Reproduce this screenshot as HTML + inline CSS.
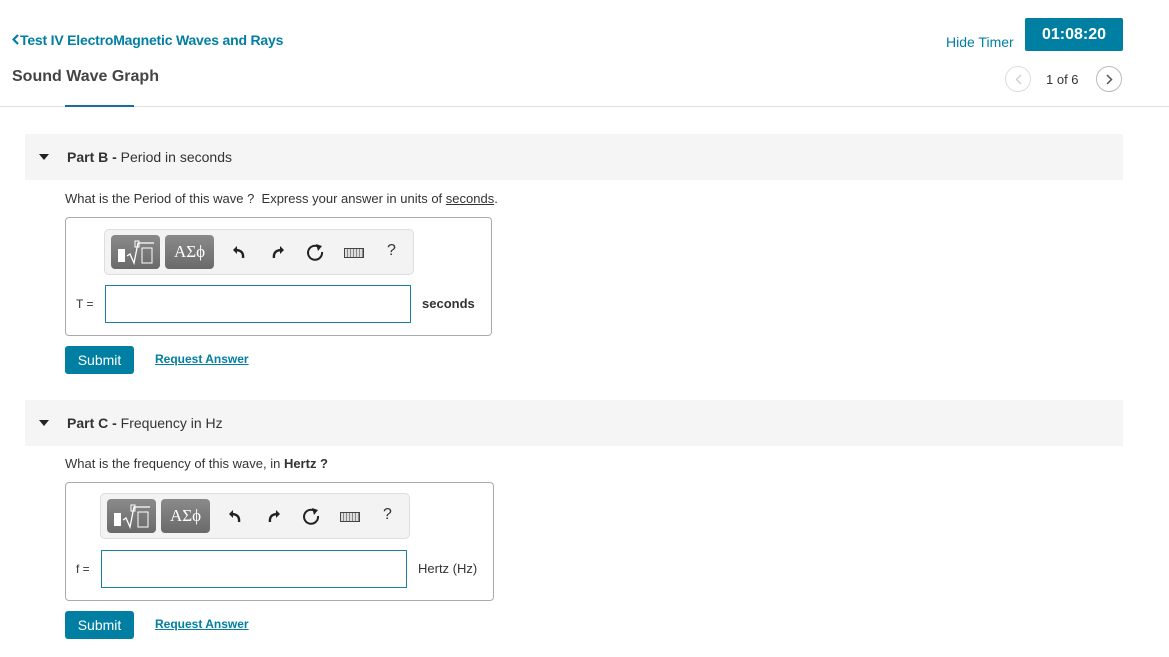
<!DOCTYPE html>
<html><head><meta charset="utf-8"><style>
*{margin:0;padding:0;box-sizing:border-box}
body{width:1169px;height:657px;background:#fff;font-family:"Liberation Sans",Arial,sans-serif;color:#333;position:relative;overflow:hidden}
.a{position:absolute}
.bar{position:absolute;left:25px;width:1098px;height:46px;background:#f5f5f5;font-size:14px;color:#333}
.bar .tri{position:absolute;left:14px;top:20px;width:0;height:0;border-left:5px solid transparent;border-right:5px solid transparent;border-top:6px solid #222}
.bar span{position:absolute;left:42px;top:15px}
.q{font-size:13px;color:#333}
.box{position:absolute;border:1px solid #aaa;border-radius:4px}
.tb{position:absolute;height:46px;background:#f3f3f3;border:1px solid #ddd;border-radius:5px}
.btn{position:absolute;top:5px;height:34px;background:linear-gradient(#8a8a8a,#6a6a6a);border-radius:4px;color:#fff}
.inp{position:absolute;height:38px;border:1px solid #1a7fa0;background:#fff}
.sub{position:absolute;left:65px;width:69px;height:28px;background:#007fa3;border-radius:3px;color:#fff;font-size:14px;text-align:center;line-height:28px}
.req{position:absolute;left:155px;font-size:12px;font-weight:bold;color:#007fa3;text-decoration:underline}
svg.ic{position:absolute}
</style></head><body>
<svg class="a" style="left:12px;top:34px" width="7" height="11" viewBox="0 0 7 11"><path d="M6 1 L1.5 5.5 L6 10" stroke="#007fa3" stroke-width="2.2" fill="none"/></svg>
<div class="a" style="left:20px;top:32px;font-size:14px;font-weight:bold;color:#007fa3;letter-spacing:-0.2px">Test IV ElectroMagnetic Waves and Rays</div>
<div class="a" style="left:12px;top:68px;font-size:16px;font-weight:bold;color:#444">Sound Wave Graph</div>
<div class="a" style="left:0;top:106px;width:1169px;height:1px;background:#ddd"></div>
<div class="a" style="left:65px;top:105px;width:69px;height:2px;background:#1a6f8c"></div>
<div class="a" style="left:946px;top:34px;font-size:14px;color:#007fa3">Hide Timer</div>
<div class="a" style="left:1025px;top:18px;width:98px;height:33px;background:#007fa3;border-radius:2px;color:#fff;font-size:16px;font-weight:bold;text-align:center;line-height:33px">01:08:20</div>
<div class="a" style="left:1005px;top:66px;width:26px;height:26px;border:1px solid #ddd;border-radius:50%"><svg class="a" style="left:9px;top:7px" width="7" height="11"><path d="M6 1 L1.5 5.5 L6 10" stroke="#ccc" stroke-width="1.3" fill="none"/></svg></div>
<div class="a" style="left:1046px;top:72px;font-size:13px;color:#333">1 of 6</div>
<div class="a" style="left:1096px;top:66px;width:26px;height:26px;border:1px solid #bbb;border-radius:50%"><svg class="a" style="left:9px;top:7px" width="7" height="11"><path d="M1 1 L5.5 5.5 L1 10" stroke="#555" stroke-width="1.5" fill="none"/></svg></div>

<div class="bar" style="top:134px"><div class="tri"></div><span><b>Part B -</b> Period in seconds</span></div>
<div class="a q" style="left:65px;top:191px">What is the Period of this wave ?&nbsp; Express your answer in units of <u>seconds</u>.</div>
<div class="box" style="left:65px;top:217px;width:427px;height:119px"></div>
<div class="tb" style="left:104px;top:229px;width:310px">
 <div class="btn" style="left:6px;width:49px"><div class="a" style="left:7px;top:14px;width:7px;height:13px;background:#fff"></div><svg class="a" style="left:15px;top:5px" width="30" height="25"><path d="M1 16 L4 14 L8 23 L12 3 L28 3" stroke="#fff" stroke-width="1.3" fill="none"/><rect x="9" y="1" width="4" height="6" stroke="#fff" fill="none"/><rect x="16" y="8" width="10" height="15" stroke="#fff" fill="none"/></svg></div>
 <div class="btn" style="left:60px;width:49px;font-family:'Liberation Serif';font-size:17px;text-align:center;line-height:34px">ΑΣϕ</div>
 <svg class="ic" style="left:127px;top:15px" width="14" height="14"><path d="M5 1 L1 5 L5 9 Z" fill="#222"/><path d="M3 5 Q12 5 11 13" stroke="#222" stroke-width="2.4" fill="none"/></svg>
 <svg class="ic" style="left:166px;top:15px" width="14" height="14"><path d="M9 1 L13 5 L9 9 Z" fill="#222"/><path d="M11 5 Q2 5 3 13" stroke="#222" stroke-width="2.4" fill="none"/></svg>
 <svg class="ic" style="left:202px;top:13px" width="18" height="19"><path d="M12 4 A7 7 0 1 0 15 9" stroke="#222" stroke-width="2" fill="none"/><path d="M9 1 L15 3 L11 8 Z" fill="#222"/></svg>
 <div class="a" style="left:239px;top:18px;width:20px;height:10px;border:1px solid #444;background:repeating-linear-gradient(90deg,#ddd 0 2px,#888 2px 3px)"></div>
 <div class="a" style="left:282px;top:12px;font-size:16px;color:#333">?</div>
</div>
<div class="a" style="left:76px;top:297px;font-size:12px">T =</div>
<div class="inp" style="left:105px;top:285px;width:306px"></div>
<div class="a" style="left:422px;top:296px;font-size:13px;font-weight:bold">seconds</div>
<div class="sub" style="top:346px">Submit</div>
<div class="req" style="top:352px">Request Answer</div>

<div class="bar" style="top:400px"><div class="tri"></div><span><b>Part C -</b> Frequency in Hz</span></div>
<div class="a q" style="left:65px;top:456px">What is the frequency of this wave, in <b>Hertz ?</b></div>
<div class="box" style="left:65px;top:482px;width:429px;height:119px"></div>
<div class="tb" style="left:100px;top:493px;width:310px">
 <div class="btn" style="left:6px;width:49px"><div class="a" style="left:7px;top:14px;width:7px;height:13px;background:#fff"></div><svg class="a" style="left:15px;top:5px" width="30" height="25"><path d="M1 16 L4 14 L8 23 L12 3 L28 3" stroke="#fff" stroke-width="1.3" fill="none"/><rect x="9" y="1" width="4" height="6" stroke="#fff" fill="none"/><rect x="16" y="8" width="10" height="15" stroke="#fff" fill="none"/></svg></div>
 <div class="btn" style="left:60px;width:49px;font-family:'Liberation Serif';font-size:17px;text-align:center;line-height:34px">ΑΣϕ</div>
 <svg class="ic" style="left:127px;top:15px" width="14" height="14"><path d="M5 1 L1 5 L5 9 Z" fill="#222"/><path d="M3 5 Q12 5 11 13" stroke="#222" stroke-width="2.4" fill="none"/></svg>
 <svg class="ic" style="left:166px;top:15px" width="14" height="14"><path d="M9 1 L13 5 L9 9 Z" fill="#222"/><path d="M11 5 Q2 5 3 13" stroke="#222" stroke-width="2.4" fill="none"/></svg>
 <svg class="ic" style="left:202px;top:13px" width="18" height="19"><path d="M12 4 A7 7 0 1 0 15 9" stroke="#222" stroke-width="2" fill="none"/><path d="M9 1 L15 3 L11 8 Z" fill="#222"/></svg>
 <div class="a" style="left:239px;top:18px;width:20px;height:10px;border:1px solid #444;background:repeating-linear-gradient(90deg,#ddd 0 2px,#888 2px 3px)"></div>
 <div class="a" style="left:282px;top:12px;font-size:16px;color:#333">?</div>
</div>
<div class="a" style="left:76px;top:562px;font-size:12px">f =</div>
<div class="inp" style="left:101px;top:550px;width:306px"></div>
<div class="a" style="left:418px;top:561px;font-size:13px">Hertz (Hz)</div>
<div class="sub" style="top:611px">Submit</div>
<div class="req" style="top:617px">Request Answer</div>
</body></html>
